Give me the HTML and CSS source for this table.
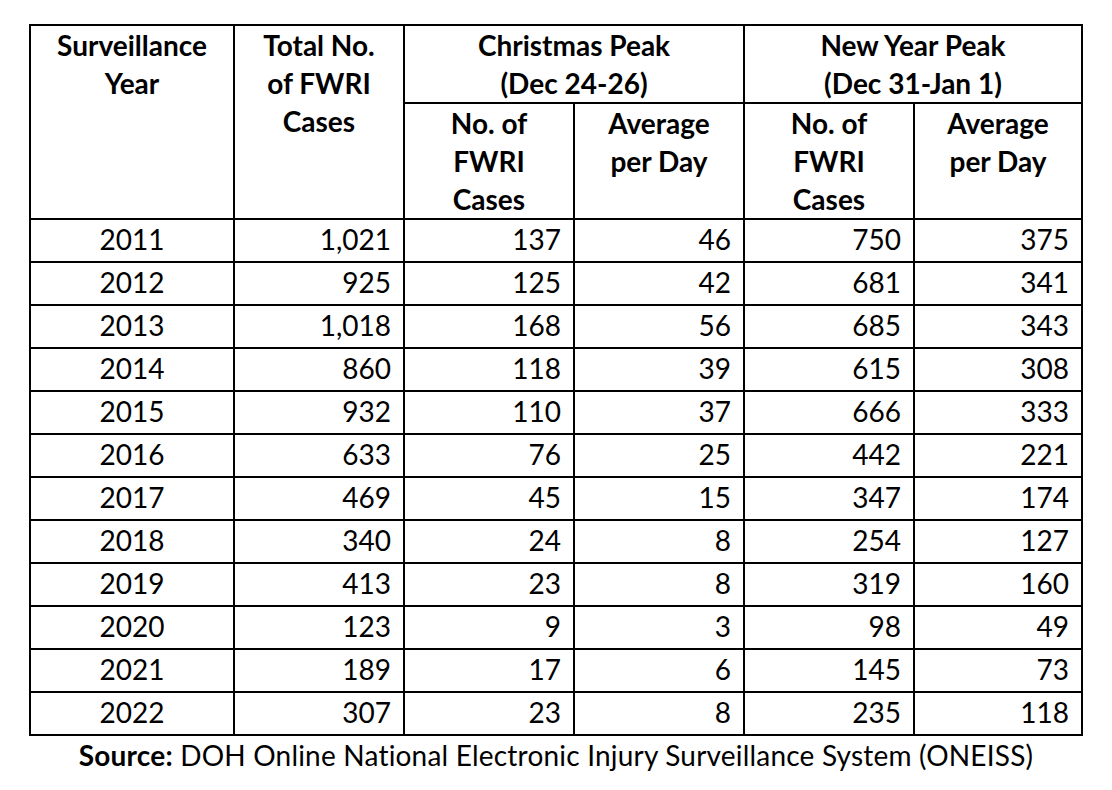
FILE: index.html
```html
<!DOCTYPE html>
<html lang="en">
<head>
<meta charset="utf-8">
<title>FWRI Cases</title>
<link rel="stylesheet" href="styles.css">
</head>
<body>
<div class="page">
  <table class="fwri">
    <colgroup>
      <col class="c-year">
      <col class="c-total">
      <col class="c-num">
      <col class="c-num">
      <col class="c-num">
      <col class="c-last">
    </colgroup>
    <thead>
      <tr>
        <th rowspan="2">Surveillance<br>Year</th>
        <th rowspan="2">Total No.<br>of FWRI<br>Cases</th>
        <th colspan="2">Christmas Peak<br>(Dec 24-26)</th>
        <th colspan="2">New Year Peak<br>(Dec 31-Jan 1)</th>
      </tr>
      <tr>
        <th>No. of<br>FWRI<br>Cases</th>
        <th>Average<br>per Day</th>
        <th>No. of<br>FWRI<br>Cases</th>
        <th>Average<br>per Day</th>
      </tr>
    </thead>
    <tbody>
      <tr><td>2011</td><td>1,021</td><td>137</td><td>46</td><td>750</td><td>375</td></tr>
      <tr><td>2012</td><td>925</td><td>125</td><td>42</td><td>681</td><td>341</td></tr>
      <tr><td>2013</td><td>1,018</td><td>168</td><td>56</td><td>685</td><td>343</td></tr>
      <tr><td>2014</td><td>860</td><td>118</td><td>39</td><td>615</td><td>308</td></tr>
      <tr><td>2015</td><td>932</td><td>110</td><td>37</td><td>666</td><td>333</td></tr>
      <tr><td>2016</td><td>633</td><td>76</td><td>25</td><td>442</td><td>221</td></tr>
      <tr><td>2017</td><td>469</td><td>45</td><td>15</td><td>347</td><td>174</td></tr>
      <tr><td>2018</td><td>340</td><td>24</td><td>8</td><td>254</td><td>127</td></tr>
      <tr><td>2019</td><td>413</td><td>23</td><td>8</td><td>319</td><td>160</td></tr>
      <tr><td>2020</td><td>123</td><td>9</td><td>3</td><td>98</td><td>49</td></tr>
      <tr><td>2021</td><td>189</td><td>17</td><td>6</td><td>145</td><td>73</td></tr>
      <tr><td>2022</td><td>307</td><td>23</td><td>8</td><td>235</td><td>118</td></tr>
    </tbody>
  </table>
  <p class="source"><strong>Source:</strong> DOH Online National Electronic Injury Surveillance System (ONEISS)</p>
</div>
</body>
</html>
```

FILE: styles.css
```css
html, body {
  margin: 0;
  padding: 0;
  background: #ffffff;
}

body {
  font-family: "Lato", "Open Sans", sans-serif;
  font-size: 28px;
  line-height: 38px;
  color: #000000;
}

.page {
  padding-top: 24px;
}

.fwri {
  border-collapse: collapse;
  table-layout: fixed;
  width: 1054px;
  margin: 0 auto;
}

.c-year { width: 204px; }
.c-total { width: 170px; }
.c-num { width: 170px; }
.c-last { width: 168px; }

.fwri th,
.fwri td {
  border: 2px solid #000000;
  padding: 0;
}

.fwri th {
  font-weight: 700;
  text-align: center;
  vertical-align: top;
}

.fwri td {
  text-align: right;
  padding: 0 12px 3px 0;
  height: 38px;
  vertical-align: top;
  font-weight: 400;
}

.fwri td:first-child {
  text-align: center;
  padding-right: 0;
}

.source {
  margin: 0;
  text-align: center;
  letter-spacing: 0.2px;
}

.source strong {
  font-weight: 700;
}
```
